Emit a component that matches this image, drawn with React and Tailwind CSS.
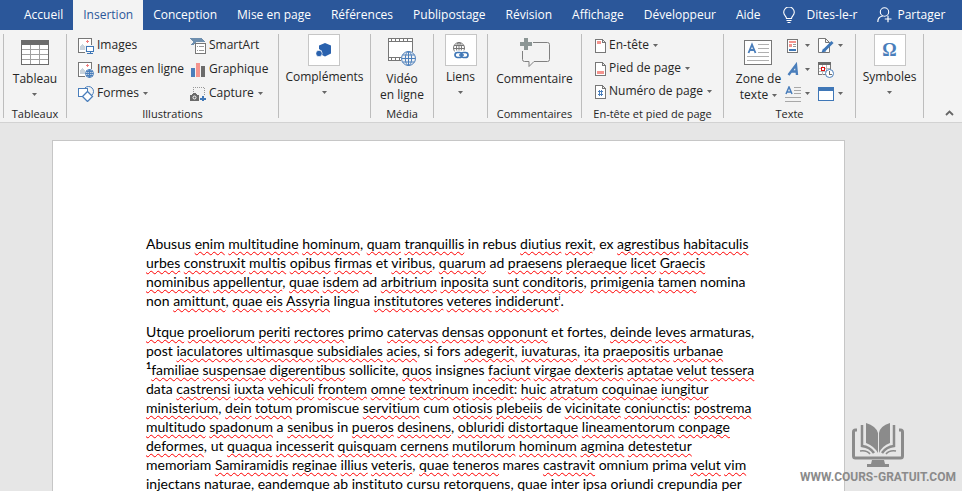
import React, { useState } from 'react';
import clsx from 'clsx';

const TABS = [
  'Accueil',
  'Insertion',
  'Conception',
  'Mise en page',
  'Références',
  'Publipostage',
  'Révision',
  'Affichage',
  'Développeur',
  'Aide',
];

// A leading "~" marks a word that the spell checker underlines
const PARAGRAPHS = [
  [
    'Abusus ~enim ~multitudine ~hominum, ~quam ~tranquillis in rebus ~diutius ~rexit, ex ~agrestibus ~habitaculis',
    '~urbes ~construxit ~multis ~opibus ~firmas et ~viribus, ~quarum ad ~praesens ~pleraeque ~licet ~Graecis',
    '~nominibus ~appellentur, ~quae ~isdem ad ~arbitrium ~inposita ~sunt ~conditoris, ~primigenia ~tamen nomina',
    'non ~amittunt, ~quae ~eis ~Assyria lingua ~institutores ~veteres ~indiderunt^i.',
  ],
  [
    '~Utque ~proeliorum ~periti ~rectores primo ~catervas ~densas ~opponunt et fortes, ~deinde ~leves armaturas,',
    'post ~iaculatores ~ultimasque ~subsidiales ~acies, si fors ~adegerit, ~iuvaturas, ~ita ~praepositis ~urbanae',
    '1^~familiae ~suspensae ~digerentibus sollicite, ~quos insignes ~faciunt ~virgae ~dexteris ~aptatae ~velut ~tessera',
    'data ~castrensi ~iuxta ~vehiculi ~frontem ~omne ~textrinum ~incedit: ~huic ~atratum ~coquinae ~iungitur',
    '~ministerium, ~dein ~totum promiscue ~servitium cum ~otiosis ~plebeiis de ~vicinitate ~coniunctis: ~postrema',
    '~multitudo ~spadonum a ~senibus in ~pueros ~desinens, ~obluridi ~distortaque ~lineamentorum ~conpage',
    '~deformes, ut ~quaqua ~incesserit ~quisquam ~cernens ~mutilorum ~hominum ~agmina ~detestetur',
    'memoriam ~Samiramidis ~reginae ~illius ~veteris, ~quae ~teneros mares ~castravit omnium prima ~velut ~vim',
    '~injectans ~naturae, ~eandemque ab ~instituto ~cursu ~retorquens, ~quae inter ~ipsa ~oriundi ~crepundia per',
  ],
];

const Caret = ({ className }) => (
  <svg width="5" height="3" viewBox="0 0 5 3" className={clsx('shrink-0', className)} aria-hidden="true">
    <path d="M0 0h5L2.5 3z" fill="#666" />
  </svg>
);

const Icon = ({ w = 16, h = 16, children, smooth }) => (
  <svg
    width={w}
    height={h}
    viewBox={`0 0 ${w} ${h}`}
    fill="none"
    shapeRendering={smooth ? 'auto' : 'crispEdges'}
    className="shrink-0"
    aria-hidden="true"
  >
    {children}
  </svg>
);

/* ---------- icons ---------- */

const TableIcon = () => (
  <Icon w={28} h={25}>
    <rect x="0.5" y="0.5" width="27" height="24" fill="#fff" stroke="#6b6b6b" />
    <rect width="28" height="5" fill="#6b6b6b" />
    <path d="M1 9.5h26M1 14.5h26M1 19.5h26M9.5 5v19M18.5 5v19" stroke="#a0a0a0" />
  </Icon>
);

const Picture = () => (
  <>
    <path d="M7 14.5H.5V.5h13V7" fill="#fff" stroke="#777" />
    <path d="M2 12V9l2-3 3 3v3z" fill="#c9d3dc" />
    <path d="M8 3.5h3M9.5 2v3" stroke="#f07f7f" />
  </>
);

const GlobeLines = ({ cx, cy, r, color = '#4a7ebb' }) => (
  <g stroke={color} shapeRendering="auto">
    <circle cx={cx} cy={cy} r={r} fill="#f3f3f3" />
    <ellipse cx={cx} cy={cy} rx={r * 0.45} ry={r} />
    <path d={`M${cx - r} ${cy}h${2 * r}M${cx} ${cy - r}v${2 * r}M${cx - r * 0.85} ${cy - r / 2}h${r * 1.7}M${cx - r * 0.85} ${cy + r / 2}h${r * 1.7}`} />
  </g>
);

const ImagesIcon = () => (
  <Icon>
    <Picture />
    <rect x="7" y="7" width="9" height="9" fill="#f3f3f3" />
    <rect x="8.5" y="8.5" width="7" height="5" fill="#fff" stroke="#3f77b7" />
    <path d="M12 14v1M9 15.5h6" stroke="#3f77b7" />
  </Icon>
);

const OnlineImagesIcon = () => (
  <Icon>
    <Picture />
    <GlobeLines cx={11.5} cy={11.5} r={4} />
  </Icon>
);

const ShapesIcon = () => (
  <Icon smooth>
    <circle cx="10.5" cy="5.5" r="5" stroke="#4a7ebb" />
    <rect x="0.5" y="2.5" width="9" height="8" fill="#fff" stroke="#4a7ebb" />
    <path d="M9.5 5.5l5 5-5 5-5-5z" fill="#fff" stroke="#4a7ebb" strokeWidth="1.3" />
  </Icon>
);

const SmartArtIcon = () => (
  <Icon>
    <path d="M0 0h11l4 4H6l-2 3H0l3-3z" fill="#6f8fae" />
    <rect x="5.5" y="5.5" width="10" height="10" fill="#fff" stroke="#777" />
    <path d="M7 8.5h1M9 8.5h5M7 12.5h1M9 12.5h5" stroke="#999" />
  </Icon>
);

const ChartIcon = () => (
  <Icon>
    <rect x="1" y="6" width="4" height="9" fill="#4a7ebb" />
    <rect x="6" y="1" width="4" height="14" fill="#f4948e" />
    <rect x="11" y="4" width="4" height="11" fill="#6b6b6b" />
  </Icon>
);

const ScreenshotIcon = () => (
  <Icon>
    <path d="M3.5 6V1.5h11V9" stroke="#999" strokeDasharray="1 1" />
    <path d="M0 9h2l1-2h3l1 2h2v6H0z" fill="#6b6b6b" />
    <circle cx="4.5" cy="11.5" r="1.5" stroke="#fff" shapeRendering="auto" />
    <path d="M13 10v5M10 12.5h6" stroke="#3f77b7" strokeWidth="2" />
  </Icon>
);

const AddInsIcon = () => (
  <Icon w={16} h={14} smooth>
    <path d="M9 0l6 2.5v8L9 13.5l-3-1.5V8L3 6V2.5z" fill="#2a62ae" />
    <circle cx="3" cy="10.5" r="3.2" fill="#2a62ae" stroke="#fff" strokeWidth="0.7" />
  </Icon>
);

const VideoIcon = () => (
  <Icon w={28} h={28}>
    <path d="M24.5 14V.5H.5v22H13" fill="#fff" stroke="#777" />
    <path d="M1 3.5h23M1 19.5h12" stroke="#777" />
    <path d="M3.5 1v3M7.5 1v3M11.5 1v3M15.5 1v3M19.5 1v3M3.5 19v3M7.5 19v3M11.5 19v3" stroke="#777" />
    <GlobeLines cx={20.5} cy={20.5} r={7} />
  </Icon>
);

const LinksIcon = () => (
  <Icon w={16} h={17} smooth>
    <g stroke="#777">
      <circle cx="6" cy="6" r="5.5" />
      <ellipse cx="6" cy="6" rx="2.5" ry="5.5" />
      <path d="M6 .5V9M1 3.5h10M.5 6.5h11" />
    </g>
    <rect x="1" y="8.5" width="15" height="8.5" rx="3" fill="#fff" />
    <rect x="2" y="10.5" width="7" height="5" rx="2.5" stroke="#3f77b7" strokeWidth="1.7" />
    <rect x="8" y="10.5" width="7" height="5" rx="2.5" stroke="#3f77b7" strokeWidth="1.7" />
    <path d="M6 13h5" stroke="#3f77b7" strokeWidth="1.5" />
  </Icon>
);

const CommentIcon = () => (
  <Icon w={30} h={29} smooth>
    <path d="M13 4.5h14.5q2 0 2 2v15q0 2-2 2H14l-5 5v-5H4.5q-2 0-2-2V13" stroke="#808080" />
    <path d="M6 0v12M0 6h12" stroke="#8b9594" strokeWidth="4" />
  </Icon>
);

const PageBase = () => (
  <path d="M.5.5h7l3 3v10H.5zM7.5.5v3h3" fill="#fff" stroke="#777" />
);

const HeaderIcon = () => (
  <Icon w={11} h={14}>
    <PageBase />
    <rect x="2" y="2" width="4" height="3" fill="#f4948e" />
  </Icon>
);

const FooterIcon = () => (
  <Icon w={11} h={14}>
    <PageBase />
    <rect x="2" y="9" width="7" height="3" fill="#f4948e" />
  </Icon>
);

const PageNumberIcon = () => (
  <Icon w={11} h={14}>
    <PageBase />
    <path d="M4.5 5v6M6.5 5v6M3 6.5h5M3 9.5h5" stroke="#4a7ebb" />
  </Icon>
);

const TextBoxIcon = () => (
  <Icon w={28} h={25}>
    <rect x="0.5" y="0.5" width="27" height="24" fill="#fff" stroke="#777" />
    <path d="M4.5 13L8 4.5l3.5 8.5M5.5 10h5" stroke="#4a7ebb" strokeWidth="1.8" shapeRendering="auto" />
    <path d="M14 4.5h11M14 8.5h11M14 12.5h11M3 16.5h22M3 20.5h22" stroke="#b0b0b0" />
  </Icon>
);

const QuickPartIcon = () => (
  <Icon>
    <rect x="2.5" y="1.5" width="10" height="13" fill="#fff" stroke="#777" />
    <rect x="4" y="3" width="7" height="2" fill="#f4948e" />
    <rect x="4" y="6" width="3" height="3" fill="#f4948e" />
    <path d="M8 6.5h3M8 8.5h3" stroke="#999" />
    <path d="M4 11.5h7" stroke="#3f77b7" strokeWidth="2" />
  </Icon>
);

const WordArtIcon = () => (
  <Icon smooth>
    <path d="M3.5 13L11 3l1 10M6 9.5h6" stroke="#4a7ebb" strokeWidth="2.4" />
  </Icon>
);

const DropCapIcon = () => (
  <Icon>
    <path d="M1 8L4 1l3 7M2 6h4" stroke="#4a7ebb" strokeWidth="1.5" shapeRendering="auto" />
    <path d="M9 1.5h7M9 4.5h7M9 7.5h7M0 11.5h16M0 15.5h16" stroke="#a8a8a8" />
  </Icon>
);

const SignatureIcon = () => (
  <Icon smooth>
    <path d="M.5.5h7l4 4v10H.5zM7.5.5v4h4" fill="#fff" stroke="#777" />
    <path d="M6 12.5L14.5 4" stroke="#3f77b7" strokeWidth="3" />
    <path d="M3.5 14.5L5 10.5l3 3z" fill="#3f77b7" />
  </Icon>
);

const DateIcon = () => (
  <Icon>
    <rect x="0.5" y="0.5" width="12" height="12" fill="#fff" stroke="#777" />
    <path d="M0 1.5h13" stroke="#6b6b6b" strokeWidth="3" />
    <path d="M1 6.5h11M1 9.5h11M4.5 3v10M8.5 3v10" stroke="#bbb" />
    <rect x="3.5" y="5.5" width="3" height="3" fill="#fff" stroke="#e01010" />
    <circle cx="11.5" cy="11.5" r="4" fill="#fff" stroke="#4a7ebb" shapeRendering="auto" />
    <path d="M11.5 9v3h2" stroke="#6b6b6b" />
  </Icon>
);

const ObjectIcon = () => (
  <Icon>
    <rect x="0.5" y="1.5" width="15" height="13" fill="#fff" stroke="#3f77b7" />
    <rect y="1" width="16" height="4" fill="#3f77b7" />
  </Icon>
);

const BulbIcon = () => (
  <Icon w={12} h={16} smooth>
    <path d="M3.5 11.5C3.5 9 .7 8.5.7 5.3a5.2 5.2 0 0 1 10.6 0c0 3.2-2.8 3.7-2.8 6.2z" stroke="#fff" strokeWidth="1.1" />
    <path d="M3.5 13.5h5M4.5 15.5h3" stroke="#fff" />
  </Icon>
);

const ShareIcon = () => (
  <Icon smooth>
    <circle cx="7.5" cy="5" r="4.2" stroke="#fff" strokeWidth="1.1" />
    <path d="M.8 15c0-3 2-5.5 5-6M11 8.8v6.4M7.8 12h6.7" stroke="#fff" strokeWidth="1.2" />
  </Icon>
);

/* ---------- ribbon parts ---------- */

const Divider = () => <div className="w-px h-21 shrink-0 bg-[#bdbdbd]"></div>;

const Group = ({ label, className, children }) => (
  <div className={clsx('flex flex-col h-22 shrink-0', className)}>
    <div className="flex justify-center h-18">{children}</div>
    {label && <div className="text-center text-[11px] leading-4 whitespace-nowrap">{label}</div>}
  </div>
);

const RowButton = ({ icon, label, caret, className }) => (
  <button type="button" className={clsx('flex items-center gap-[3px] h-[23px] whitespace-nowrap hover:bg-[#d5e1f2]', className)}>
    {icon}
    {label && <span className="leading-4 pb-0.5">{label}</span>}
    {caret && <Caret className="ml-px" />}
  </button>
);

const BigButton = ({ icon, children, caret }) => (
  <button type="button" className="flex flex-col items-center whitespace-nowrap hover:bg-[#d5e1f2]">
    <span className="flex items-center justify-center h-9">{icon}</span>
    <span className="mt-px leading-4">{children}</span>
    {caret && <Caret className="mt-1.5" />}
  </button>
);

const BoxButton = ({ icon, label }) => (
  <button type="button" className="flex flex-col items-center whitespace-nowrap hover:bg-[#d5e1f2]">
    <span className="flex items-center justify-center w-8 h-8 bg-white border border-[#c6c6c6]">{icon}</span>
    <span className="mt-[3px] leading-4">{label}</span>
    <Caret className="mt-1.5" />
  </button>
);

/* ---------- document ---------- */

const Misspelled = ({ children }) => (
  <span className="underline decoration-wavy decoration-[#f00] decoration-1 underline-offset-2 [text-decoration-skip-ink:none]">
    {children}
  </span>
);

const Word = ({ text }) => {
  const [, before = '', wrong, body, after = '', tail] = text.match(/^(?:(\d)\^)?(~?)([^,.:^]+)(?:\^(\w))?([,.:]?)$/);
  return (
    <>
      {before && <span className="align-top text-[9px] leading-3 font-bold">{before}</span>}
      {wrong ? <Misspelled>{body}</Misspelled> : body}
      {after && <span className="align-top text-[8px] leading-3">{after}</span>}
      {tail}
    </>
  );
};

const Line = ({ text }) => (
  <span className="block whitespace-nowrap">
    {text.split(' ').map((word, i) => (
      <React.Fragment key={i}>
        {i > 0 && ' '}
        <Word text={word} />
      </React.Fragment>
    ))}
  </span>
);

const Watermark = () => (
  <div className="absolute right-1.5 bottom-1.5 flex flex-col items-center text-[#8b8b8b]">
    <svg width="52" height="46" viewBox="0 0 52 46" fill="none" aria-hidden="true">
      <path d="M5 7H3.5Q1.5 7 1.5 9v24q0 2 2 2h45q2 0 2-2V9q0-2-2-2H47" stroke="currentColor" strokeWidth="3" />
      <path d="M20 37h12l1 4h4v3H15v-3h4z" fill="currentColor" />
      <path d="M14 0q10 3 12 10v20Q22 23 14 20zM38 0q-10 3-11 10v20Q30 23 38 20z" fill="currentColor" />
      <path d="M10 2v21q8 1 12 7M42 2v21q-8 1-12 7" stroke="currentColor" strokeWidth="2.5" />
      <path d="M8 28q7-1 10 3M44 28q-7-1-10 3" stroke="currentColor" strokeWidth="1.5" />
    </svg>
    <span className="font-['Roboto',sans-serif] font-bold text-xs">WWW.COURS-GRATUIT.COM</span>
  </div>
);

const App = () => {
  const [active, setActive] = useState('Insertion');

  return (
    <div className="relative flex flex-col h-screen overflow-hidden bg-[#e6e6e6] font-['Open_Sans',sans-serif] text-xs text-[#262626]">
      {/* Tabs */}
      <nav className="flex shrink-0 h-[30px] pl-3.5 bg-[#2b579a] text-white whitespace-nowrap">
        {TABS.map((tab) => (
          <button
            key={tab}
            type="button"
            onClick={() => setActive(tab)}
            className={clsx('px-2.5', active === tab && 'bg-[#f3f3f3] text-[#2b579a]')}
          >
            {tab}
          </button>
        ))}
        <button type="button" className="flex items-center gap-3 ml-3">
          <BulbIcon />
          Dites-le-r
        </button>
        <button type="button" className="flex items-center gap-1 ml-5">
          <ShareIcon />
          Partager
        </button>
      </nav>

      {/* Ribbon */}
      <div className="flex shrink-0 h-[93px] pt-1 pl-[3px] bg-[#f3f3f3] border-b border-[#d2d2d2]">
        <Divider />
        <Group label="Tableaux" className="w-[62px]">
          <BigButton icon={<TableIcon />} caret>Tableau</BigButton>
        </Group>
        <Divider />
        <Group label="Illustrations" className="w-[211px]">
          <div className="grid grid-cols-[112px_auto] grow pl-[11px]">
            <RowButton icon={<ImagesIcon />} label="Images" />
            <RowButton icon={<SmartArtIcon />} label="SmartArt" />
            <RowButton icon={<OnlineImagesIcon />} label="Images en ligne" />
            <RowButton icon={<ChartIcon />} label="Graphique" />
            <RowButton icon={<ShapesIcon />} label="Formes" caret />
            <RowButton icon={<ScreenshotIcon />} label="Capture" caret />
          </div>
        </Group>
        <Divider />
        <Group className="w-[91px]">
          <BoxButton icon={<AddInsIcon />} label="Compléments" />
        </Group>
        <Divider />
        <Group label="Média" className="w-[62px]">
          <BigButton icon={<VideoIcon />}>Vidéo<br />en ligne</BigButton>
        </Group>
        <Divider />
        <Group className="w-[53px]">
          <BoxButton icon={<LinksIcon />} label="Liens" />
        </Group>
        <Divider />
        <Group label="Commentaires" className="w-[93px]">
          <BigButton icon={<CommentIcon />}>Commentaire</BigButton>
        </Group>
        <Divider />
        <Group label="En-tête et pied de page" className="w-[141px]">
          <div className="flex flex-col items-start grow pl-[13px]">
            <RowButton icon={<HeaderIcon />} label="En-tête" caret />
            <RowButton icon={<FooterIcon />} label="Pied de page" caret />
            <RowButton icon={<PageNumberIcon />} label="Numéro de page" caret />
          </div>
        </Group>
        <Divider />
        <Group label="Texte" className="w-[131px]">
          <BigButton icon={<TextBoxIcon />}>
            Zone de<br />
            <span className="inline-flex items-center gap-1">texte<Caret /></span>
          </BigButton>
          <div className="grid grid-cols-[33px_auto] pl-1">
            <RowButton icon={<QuickPartIcon />} caret />
            <RowButton icon={<SignatureIcon />} caret />
            <RowButton icon={<WordArtIcon />} caret />
            <RowButton icon={<DateIcon />} />
            <RowButton icon={<DropCapIcon />} caret />
            <RowButton icon={<ObjectIcon />} caret />
          </div>
        </Group>
        <Divider />
        <Group className="w-[67px]">
          <BoxButton
            icon={<span className="font-['Liberation_Serif',serif] font-bold text-lg text-[#4a7ebb]">Ω</span>}
            label="Symboles"
          />
        </Group>
        <Divider />
        <button type="button" title="Réduire le ruban" className="self-end ml-auto mr-2 pb-1.5">
          <svg width="9" height="6" viewBox="0 0 9 6" fill="none" aria-hidden="true">
            <path d="M1 5l3.5-3.5L8 5" stroke="#666" strokeWidth="1.8" />
          </svg>
        </button>
      </div>

      {/* Page */}
      <main className="grow min-h-0 w-[793px] mt-[17px] ml-[52px] pt-[93px] px-[93px] overflow-hidden bg-white border border-b-0 border-[#c6c6c6] font-['Lato',sans-serif] text-sm leading-[19px] [font-variant-ligatures:none] text-black">
        {PARAGRAPHS.map((lines, i) => (
          <p key={i} className="mb-3">
            {lines.map((line) => <Line key={line} text={line} />)}
          </p>
        ))}
      </main>

      <Watermark />
    </div>
  );
};

export default App;
